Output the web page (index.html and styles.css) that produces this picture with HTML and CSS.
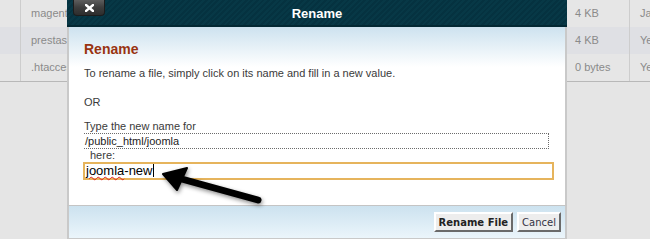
FILE: index.html
```html
<!DOCTYPE html>
<html lang="en">
<head>
    <meta charset="UTF-8">
    <title>Rename</title>
    <link rel="stylesheet" href="styles.css">
</head>
<body>
    <!-- File list behind the modal -->
    <div class="file-list">
        <div class="file-row">
            <div class="cell cell-check"></div>
            <div class="cell cell-name">magento</div>
            <div class="cell cell-size">4 KB</div>
            <div class="cell cell-date">Jan 12</div>
        </div>
        <div class="file-row row-alt">
            <div class="cell cell-check"></div>
            <div class="cell cell-name">prestashop</div>
            <div class="cell cell-size">4 KB</div>
            <div class="cell cell-date">Yesterday</div>
        </div>
        <div class="file-row">
            <div class="cell cell-check"></div>
            <div class="cell cell-name">.htaccess</div>
            <div class="cell cell-size">0 bytes</div>
            <div class="cell cell-date">Yesterday</div>
        </div>
    </div>

    <!-- Rename dialog -->
    <div class="dialog">
        <div class="dialog-head">
            <div class="close-btn">
                <svg width="9" height="8" viewBox="0 0 9 8">
                    <path d="M1 1 L8 7 M8 1 L1 7" stroke="#fff" stroke-width="2.4" stroke-linecap="square"/>
                </svg>
            </div>
            <span class="dialog-title">Rename</span>
        </div>
        <div class="dialog-body">
            <h2 class="rename-heading">Rename</h2>
            <p class="hint">To rename a file, simply click on its name and fill in a new value.</p>
            <p class="or-line">OR</p>
            <p class="type-line">Type the new name for</p>
            <div class="path-box">/public_html/joomla</div>
            <p class="here-line">here:</p>
            <div class="name-input"><span class="misspelled">joomla</span>-new<span class="caret"></span></div>
        </div>
        <div class="dialog-foot">
            <button class="btn btn-main">Rename File</button>
            <button class="btn">Cancel</button>
        </div>
    </div>

    <!-- Pointer arrow drawn over the dialog -->
    <svg class="pointer-arrow" width="120" height="60" viewBox="150 160 120 60">
        <g class="arrow-shape">
            <line x1="178" y1="178" x2="258" y2="200" stroke="#000" stroke-width="7" stroke-linecap="round"/>
            <polygon points="163,174 187,168 177,190" fill="#000" stroke="#000" stroke-width="2" stroke-linejoin="round"/>
        </g>
    </svg>
</body>
</html>
```

FILE: styles.css
```css
/* Base page */
html, body {
    margin: 0;
    padding: 0;
}

body {
    width: 650px;
    height: 239px;
    overflow: hidden;
    position: relative;
    background: #e5e5e5;
    font-family: "Liberation Sans", Arial, sans-serif;
}

/* File list in the background */
.file-list {
    border-bottom: 1px solid #b8b8b8;
}

.file-row {
    display: grid;
    grid-template-columns: 21px 544px 65px 20px;
    height: 27px;
    background: #e6e6e6;
}

.row-alt {
    background: #dfe0e4;
}

.cell {
    font-size: 11px;
    line-height: 27px;
    color: #8a8a8a;
    white-space: nowrap;
    overflow: hidden;
}

.cell-check {
    border-right: 1px solid #cdcdcd;
}

.cell-name {
    padding-left: 10px;
}

.cell-size {
    padding-left: 10px;
    border-right: 1px solid #cdcdcd;
}

.cell-date {
    padding-left: 10px;
}

/* Modal window */
.dialog {
    position: absolute;
    top: 0;
    left: 67px;
    width: 500px;
}

.dialog-head {
    height: 25px;
    border-bottom: 2px solid #022833;
    background: repeating-linear-gradient(135deg, #073846 0, #073846 2px, #053240 2px, #053240 4px);
    display: flex;
    justify-content: center;
    align-items: center;
    position: relative;
}

.dialog-title {
    color: #fff;
    font-weight: bold;
    font-size: 13px;
    margin-top: 2px;
}

.close-btn {
    position: absolute;
    left: 6px;
    top: -2px;
    width: 32px;
    height: 18px;
    box-sizing: border-box;
    border: 1px solid #1c1c1c;
    border-top: none;
    border-radius: 0 0 4px 4px;
    background: linear-gradient(#666, #3d3d3d 55%, #2d2d2d);
    box-shadow: inset 0 1px 0 rgba(255, 255, 255, 0.25);
    display: flex;
    justify-content: center;
    align-items: center;
    padding-top: 3px;
}

.close-btn svg {
    display: block;
}

.dialog-body {
    border-left: 2px solid #c9c9c9;
    border-right: 2px solid #c9c9c9;
    background: linear-gradient(#cde2ef, #ffffff 40px);
    padding: 14px 15px 25px;
    font-size: 11px;
    color: #3a3a3a;
}

.rename-heading {
    margin: 0;
    font-size: 14px;
    line-height: 17px;
    color: #993311;
}

.hint {
    margin: 8px 0 0;
    line-height: 14px;
}

.or-line {
    margin: 15px 0 0;
    line-height: 14px;
}

.type-line {
    margin: 11px 0 0;
    line-height: 13px;
}

.path-box {
    width: 465px;
    box-sizing: border-box;
    border: 1px dotted #6c6c6c;
    border-left: none;
    line-height: 14px;
    color: #222;
    padding-left: 1px;
}

.here-line {
    margin: 0;
    padding-left: 6px;
    line-height: 13px;
}

.name-input {
    margin-left: -1px;
    width: 471px;
    box-sizing: border-box;
    border: 2px solid #e6b45c;
    height: 18px;
    font-size: 13px;
    line-height: 14px;
    color: #000;
    padding-left: 1px;
    background: #fff;
}

.misspelled {
    text-decoration: underline wavy #e02020;
    text-decoration-thickness: 1px;
    text-underline-offset: 1px;
}

.caret {
    display: inline-block;
    width: 1px;
    height: 13px;
    background: #000;
    vertical-align: -2px;
    margin-left: 1px;
}

.dialog-foot {
    border: 2px solid #c9c9c9;
    border-top: 1px solid #c4c4c4;
    height: 26px;
    padding: 6px 4px 0 0;
    background: linear-gradient(#cce2ef, #ebf5fb);
    display: flex;
    justify-content: flex-end;
    align-items: flex-start;
    gap: 4px;
}

.btn {
    height: 20px;
    padding: 0 3px;
    white-space: nowrap;
    font-family: "DejaVu Sans", Verdana, sans-serif;
    font-size: 10px;
    color: #334;
    background: #ededed;
    border: 2px solid;
    border-color: #fff #6a6a6a #6a6a6a #fff;
}

.btn-main {
    font-weight: bold;
    color: #222;
}

/* Arrow over the dialog */
.pointer-arrow {
    position: absolute;
    left: 150px;
    top: 160px;
}

.arrow-shape {
    filter: drop-shadow(1px 2px 2px rgba(0, 0, 0, 0.45));
}
```
